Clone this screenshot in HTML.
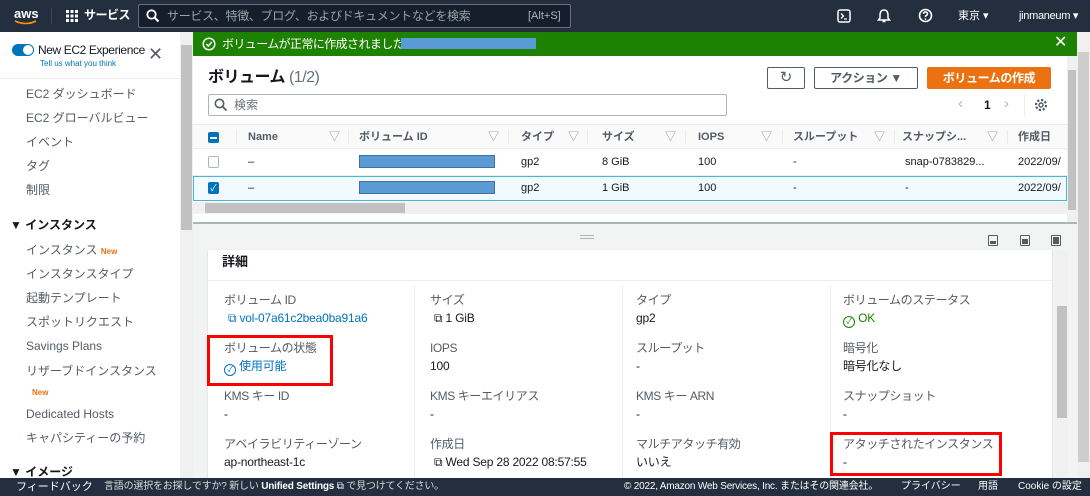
<!DOCTYPE html>
<html><head><meta charset="utf-8"><style>
*{box-sizing:border-box;margin:0;padding:0}
body{width:1090px;height:496px;overflow:hidden;font-family:"Liberation Sans","Noto Sans CJK JP",sans-serif;font-size:12px;line-height:15px;color:#16191f;background:#f2f3f3;position:relative}
.abs{position:absolute}
.top{left:0;top:0;width:1090px;height:32px;background:#232f3e;color:#fff}
.side{left:0;top:32px;width:180px;height:446px;background:#fff}
.side .it{position:absolute;left:26px;color:#545b64;font-size:12px}
.vs{background:#f0f0f0}
.thumb{background:#c1c1c1}
.foot{left:0;top:478px;width:1090px;height:18px;background:#232f3e;color:#fff;font-size:10px;line-height:12px}
.th{position:absolute;top:131px;font-weight:bold;font-size:11px;line-height:13px;color:#545b64}
.td{position:absolute;font-size:11px;line-height:13px;color:#16191f}
.lbl{position:absolute;color:#545b64;font-size:12px;letter-spacing:-0.4px}
.val{position:absolute;color:#16191f;font-size:12px;letter-spacing:-0.2px}
.blue{background:#5b9bd5;border:1px solid #41719c}
.sep{position:absolute;width:1px;background:#eaeded}
.arr{color:#879596;font-weight:normal}
</style></head><body>
<div class="abs top">
 <div class="abs" style="left:14px;top:6px;font-weight:bold;font-size:13px">aws</div>
 <svg class="abs" style="left:14px;top:20px" width="24" height="6"><path d="M1 1 Q12 6 22 1" stroke="#ff9900" stroke-width="1.6" fill="none"/></svg>
 <div class="abs" style="left:51px;top:8px;width:1px;height:16px;background:#444"></div>
 <svg class="abs" style="left:66px;top:10px" width="12" height="12" fill="#fff"><rect x="0" y="0" width="3" height="3"/><rect x="4.5" y="0" width="3" height="3"/><rect x="9" y="0" width="3" height="3"/><rect x="0" y="4.5" width="3" height="3"/><rect x="4.5" y="4.5" width="3" height="3"/><rect x="9" y="4.5" width="3" height="3"/><rect x="0" y="9" width="3" height="3"/><rect x="4.5" y="9" width="3" height="3"/><rect x="9" y="9" width="3" height="3"/></svg>
 <div class="abs" style="left:84px;top:8px;font-weight:bold;font-size:12px;letter-spacing:-0.5px">サービス</div>
 <div class="abs" style="left:138px;top:4px;width:433px;height:24px;background:#161e2d;border:1px solid #687078;border-radius:2px"></div>
 <svg class="abs" style="left:146px;top:9px" width="14" height="14"><circle cx="5.5" cy="5.5" r="4.2" stroke="#fff" stroke-width="1.8" fill="none"/><path d="M8.5 8.5 L12.5 12.5" stroke="#fff" stroke-width="2"/></svg>
 <div class="abs" style="left:167px;top:9px;color:#95a5a6;font-size:12px;letter-spacing:-0.3px">サービス、特徴、ブログ、およびドキュメントなどを検索</div>
 <div class="abs" style="left:528px;top:9px;color:#aab7b8;font-size:11px">[Alt+S]</div>
 <svg class="abs" style="left:837px;top:9px" width="14" height="14"><rect x="1" y="1" width="12" height="12" rx="2" stroke="#fff" stroke-width="1.5" fill="none"/><path d="M4 4.5 L6.5 7 L4 9.5 M7 10 H10" stroke="#fff" stroke-width="1.3" fill="none"/></svg>
 <svg class="abs" style="left:876px;top:8px" width="16" height="16"><path d="M8 2 C5 2 4 4.5 4 7 V10 L2.5 12 H13.5 L12 10 V7 C12 4.5 11 2 8 2 Z M6.5 13.5 H9.5" stroke="#fff" stroke-width="1.5" fill="none"/></svg>
 <svg class="abs" style="left:918px;top:8px" width="15" height="15"><circle cx="7.5" cy="7.5" r="6" stroke="#fff" stroke-width="1.6" fill="none"/><path d="M5.5 6 Q5.5 4 7.5 4 Q9.5 4 9.5 6 Q9.5 7.2 7.5 8 V9" stroke="#fff" stroke-width="1.5" fill="none"/><circle cx="7.5" cy="11" r="0.9" fill="#fff"/></svg>
 <div class="abs" style="left:958px;top:9px;font-size:11px">東京 ▾</div>
 <div class="abs" style="left:1019px;top:9px;font-size:11px;letter-spacing:-0.3px">jinmaneum ▾</div>
</div>

<div class="abs side">
 <div class="abs" style="left:12px;top:12px;width:22px;height:12px;border-radius:6px;background:#0073bb"></div>
 <div class="abs" style="left:23px;top:13px;width:10px;height:10px;border-radius:5px;background:#fff"></div>
 <div class="abs" style="left:38px;top:11px;font-size:12px;color:#16191f;letter-spacing:-0.4px">New EC2 Experience</div>
 <div class="abs" style="left:40px;top:27px;font-size:8px;line-height:10px;color:#0073bb">Tell us what you think</div>
 <div class="abs" style="left:148px;top:13px;font-size:18px;color:#545b64;line-height:18px">✕</div>
 <div class="abs" style="left:0;top:46px;width:180px;height:1px;background:#eaeded"></div>
 <div class="it" style="top:55px">EC2 ダッシュボード</div>
 <div class="it" style="top:79px">EC2 グローバルビュー</div>
 <div class="it" style="top:103px">イベント</div>
 <div class="it" style="top:127px">タグ</div>
 <div class="it" style="top:151px">制限</div>
 <div class="abs" style="left:10px;top:186px;font-weight:bold;font-size:12px;color:#16191f">▼ インスタンス</div>
 <div class="it" style="top:211px">インスタンス <span style="color:#ec7211;font-size:8px;font-weight:bold">New</span></div>
 <div class="it" style="top:235px">インスタンスタイプ</div>
 <div class="it" style="top:259px">起動テンプレート</div>
 <div class="it" style="top:283px">スポットリクエスト</div>
 <div class="it" style="top:307px">Savings Plans</div>
 <div class="it" style="top:332px">リザーブドインスタンス</div>
 <div class="abs" style="left:32px;top:353px;color:#ec7211;font-size:8px;font-weight:bold">New</div>
 <div class="it" style="top:375px">Dedicated Hosts</div>
 <div class="it" style="top:399px">キャパシティーの予約</div>
 <div class="abs" style="left:10px;top:433px;font-weight:bold;font-size:12px;color:#16191f">▼ イメージ</div>
</div>
<div class="abs vs" style="left:180px;top:32px;width:13px;height:446px"></div>
<div class="abs thumb" style="left:181px;top:45px;width:11px;height:185px"></div>

<div class="abs" style="left:193px;top:32px;width:884px;height:24px;background:#1d8102;color:#fff">
 <svg class="abs" style="left:9px;top:5px" width="14" height="14"><circle cx="7" cy="7" r="5.8" stroke="#fff" stroke-width="1.5" fill="none"/><path d="M4.3 7 L6.3 9 L9.8 5" stroke="#fff" stroke-width="1.5" fill="none"/></svg>
 <div class="abs" style="left:29px;top:5px;font-size:12px;letter-spacing:-0.6px">ボリュームが正常に作成されました</div>
 <div class="abs blue" style="left:208px;top:6px;width:135px;height:11px;border:none"></div>
 <div class="abs" style="left:861px;top:3px;font-size:16px">✕</div>
</div>
<div class="abs vs" style="left:1077px;top:32px;width:13px;height:446px"></div>
<div class="abs thumb" style="left:1078px;top:52px;width:11px;height:410px;background:#cdcdcd"></div>

<div class="abs" style="left:193px;top:56px;width:874px;height:168px;background:#fff"></div>
<div class="abs" style="left:208px;top:68px;font-size:16px;line-height:20px;font-weight:bold;letter-spacing:-0.5px">ボリューム <span style="font-weight:normal;color:#687078">(1/2)</span></div>
<div class="abs" style="left:767px;top:67px;width:38px;height:22px;border:1px solid #545b64;border-radius:2px;background:#fff;text-align:center;font-size:15px;line-height:19px;color:#545b64">↻</div>
<div class="abs" style="left:814px;top:67px;width:104px;height:22px;border:1px solid #545b64;border-radius:2px;background:#fff;text-align:center;font-size:12px;line-height:20px;color:#545b64;font-weight:bold;letter-spacing:-0.4px">アクション ▼</div>
<div class="abs" style="left:927px;top:67px;width:124px;height:22px;border-radius:2px;background:#ec7211;text-align:center;font-size:12px;line-height:22px;color:#fff;font-weight:bold;letter-spacing:-0.4px">ボリュームの作成</div>
<div class="abs" style="left:208px;top:94px;width:519px;height:22px;border:1px solid #aab7b8;border-radius:2px;background:#fff"></div>
<svg class="abs" style="left:214px;top:98px" width="14" height="14"><circle cx="5.5" cy="5.5" r="4.2" stroke="#545b64" stroke-width="1.6" fill="none"/><path d="M8.5 8.5 L12.5 12.5" stroke="#545b64" stroke-width="1.8"/></svg>
<div class="abs" style="left:234px;top:98px;color:#687078">検索</div>
<div class="abs" style="left:958px;top:96px;color:#aab7b8;font-size:15px">‹</div>
<div class="abs" style="left:984px;top:98px;font-weight:bold">1</div>
<div class="abs" style="left:1004px;top:96px;color:#aab7b8;font-size:15px">›</div>
<div class="abs" style="left:1024px;top:94px;width:1px;height:22px;background:#eaeded"></div>
<svg class="abs" style="left:1034px;top:98px" width="14" height="14"><circle cx="7" cy="7" r="5" stroke="#545b64" stroke-width="2.2" fill="none" stroke-dasharray="2.2 1.7"/><circle cx="7" cy="7" r="2" stroke="#545b64" stroke-width="1.4" fill="none"/></svg>
<div class="abs" style="left:193px;top:124px;width:874px;height:1px;background:#eaeded"></div>
<div class="abs" style="left:193px;top:125px;width:874px;height:24px;background:#fafafa;border-bottom:1px solid #eaeded"></div>
<div class="abs" style="left:208px;top:132px;width:11px;height:11px;background:#0073bb;border-radius:2px"><div style="margin:4.5px 2px;height:2px;background:#fff"></div></div>
<div class="th" style="left:248px">Name</div>
<div class="th" style="left:359px">ボリューム ID</div>
<div class="th" style="left:521px">タイプ</div>
<div class="th" style="left:602px">サイズ</div>
<div class="th" style="left:698px">IOPS</div>
<div class="th" style="left:793px">スループット</div>
<div class="th" style="left:902px">スナップシ...</div>
<div class="th" style="left:1018px">作成日</div>
<div class="th arr" style="left:329px">▽</div>
<div class="th arr" style="left:488px">▽</div>
<div class="th arr" style="left:568px">▽</div>
<div class="th arr" style="left:665px">▽</div>
<div class="th arr" style="left:761px">▽</div>
<div class="th arr" style="left:874px">▽</div>
<div class="th arr" style="left:987px">▽</div>
<div class="sep" style="left:236px;top:130px;height:14px"></div><div class="sep" style="left:348px;top:130px;height:14px"></div><div class="sep" style="left:508px;top:130px;height:14px"></div><div class="sep" style="left:587px;top:130px;height:14px"></div><div class="sep" style="left:685px;top:130px;height:14px"></div><div class="sep" style="left:782px;top:130px;height:14px"></div><div class="sep" style="left:894px;top:130px;height:14px"></div><div class="sep" style="left:1007px;top:130px;height:14px"></div>
<div class="abs" style="left:193px;top:175px;width:874px;height:1px;background:#eaeded"></div>
<div class="abs" style="left:208px;top:156px;width:11px;height:12px;border:1px solid #aab7b8;border-radius:2px;background:#fff"></div>
<div class="td" style="left:248px;top:156px">–</div>
<div class="abs blue" style="left:359px;top:155px;width:136px;height:13px"></div>
<div class="td" style="left:521px;top:156px">gp2</div><div class="td" style="left:602px;top:156px">8 GiB</div><div class="td" style="left:698px;top:156px">100</div><div class="td" style="left:793px;top:156px">-</div><div class="td" style="left:905px;top:156px">snap-0783829...</div><div class="td" style="left:1018px;top:156px">2022/09/</div>
<div class="abs" style="left:193px;top:176px;width:874px;height:25px;background:#f1faff;border:1px solid #44b9d6"></div>
<div class="abs" style="left:208px;top:182px;width:11px;height:12px;background:#0073bb;border-radius:2px;color:#fff;font-size:9px;line-height:12px;text-align:center">✓</div>
<div class="td" style="left:248px;top:182px">–</div>
<div class="abs blue" style="left:359px;top:181px;width:136px;height:13px"></div>
<div class="td" style="left:521px;top:182px">gp2</div><div class="td" style="left:602px;top:182px">1 GiB</div><div class="td" style="left:698px;top:182px">100</div><div class="td" style="left:793px;top:182px">-</div><div class="td" style="left:905px;top:182px">-</div><div class="td" style="left:1018px;top:182px">2022/09/</div>
<div class="abs" style="left:193px;top:202px;width:874px;height:12px;background:#f0f0f0"></div>
<div class="abs" style="left:205px;top:203px;width:200px;height:10px;background:#c1c1c1"></div>
<div class="abs" style="left:1067px;top:56px;width:10px;height:168px;background:#f0f0f0"></div>
<div class="abs" style="left:1068px;top:70px;width:8px;height:140px;background:#c1c1c1"></div>
<div class="abs" style="left:193px;top:222px;width:884px;height:2px;background:#aab7b8"></div>
<div class="abs" style="left:580px;top:235px;width:14px;height:4px;border-top:1px solid #aab7b8;border-bottom:1px solid #aab7b8"></div>
<div class="abs" style="left:988px;top:235px;width:10px;height:11px;border:1.5px solid #545b64;border-radius:1px"><div style="position:absolute;left:1px;right:1px;bottom:1px;height:3px;background:#545b64"></div></div>
<div class="abs" style="left:1020px;top:235px;width:10px;height:11px;border:1.5px solid #545b64;border-radius:1px"><div style="position:absolute;left:1px;right:1px;bottom:1px;top:3px;background:#545b64"></div></div>
<div class="abs" style="left:1051px;top:235px;width:10px;height:11px;border:1.5px solid #545b64;border-radius:1px"><div style="position:absolute;left:1px;right:1px;bottom:1px;top:1px;background:#545b64"></div></div>

<div class="abs" style="left:208px;top:250px;width:844px;height:228px;background:#fff;box-shadow:0 1px 2px rgba(0,0,0,.15)"></div>
<div class="abs" style="left:1056px;top:250px;width:12px;height:228px;background:#f0f0f0"></div>
<div class="abs" style="left:1057px;top:306px;width:10px;height:112px;background:#c1c1c1"></div>
<div class="abs" style="left:222px;top:254px;font-weight:bold;font-size:13px">詳細</div>
<div class="abs" style="left:208px;top:280px;width:844px;height:1px;background:#eaeded"></div>
<div class="sep" style="left:414px;top:285px;height:193px"></div>
<div class="sep" style="left:622px;top:285px;height:193px"></div>
<div class="sep" style="left:830px;top:285px;height:193px"></div>

<div class="lbl" style="left:224px;top:293px">ボリューム ID</div>
<div class="val" style="left:228px;top:311px;color:#0073bb">⧉ vol-07a61c2bea0ba91a6</div>
<div class="lbl" style="left:224px;top:341px">ボリュームの状態</div>
<div class="val" style="left:224px;top:359px;color:#0073bb"><span style="display:inline-block;width:12px;height:12px;border:1.5px solid #0073bb;border-radius:6px;font-size:8px;line-height:9px;text-align:center;vertical-align:-2px">✓</span> 使用可能</div>
<div class="abs" style="left:207px;top:335px;width:126px;height:51px;border:3px solid #f00"></div>
<div class="lbl" style="left:224px;top:389px">KMS キー ID</div><div class="val" style="left:224px;top:407px">-</div>
<div class="lbl" style="left:224px;top:437px">アベイラビリティーゾーン</div><div class="val" style="left:224px;top:455px">ap-northeast-1c</div>

<div class="lbl" style="left:430px;top:293px">サイズ</div><div class="val" style="left:434px;top:311px">⧉ 1 GiB</div>
<div class="lbl" style="left:430px;top:341px">IOPS</div><div class="val" style="left:430px;top:359px">100</div>
<div class="lbl" style="left:430px;top:389px">KMS キーエイリアス</div><div class="val" style="left:430px;top:407px">-</div>
<div class="lbl" style="left:430px;top:437px">作成日</div><div class="val" style="left:434px;top:455px">⧉ Wed Sep 28 2022 08:57:55</div>

<div class="lbl" style="left:636px;top:293px">タイプ</div><div class="val" style="left:636px;top:311px">gp2</div>
<div class="lbl" style="left:636px;top:341px">スループット</div><div class="val" style="left:636px;top:359px">-</div>
<div class="lbl" style="left:636px;top:389px">KMS キー ARN</div><div class="val" style="left:636px;top:407px">-</div>
<div class="lbl" style="left:636px;top:437px">マルチアタッチ有効</div><div class="val" style="left:636px;top:455px">いいえ</div>

<div class="lbl" style="left:843px;top:293px">ボリュームのステータス</div>
<div class="val" style="left:843px;top:311px;color:#1d8102"><span style="display:inline-block;width:12px;height:12px;border:1.5px solid #1d8102;border-radius:6px;font-size:8px;line-height:9px;text-align:center;vertical-align:-2px">✓</span> OK</div>
<div class="lbl" style="left:843px;top:341px">暗号化</div><div class="val" style="left:843px;top:359px">暗号化なし</div>
<div class="lbl" style="left:843px;top:389px">スナップショット</div><div class="val" style="left:843px;top:407px">-</div>
<div class="lbl" style="left:843px;top:437px">アタッチされたインスタンス</div><div class="val" style="left:843px;top:455px">-</div>
<div class="abs" style="left:830px;top:432px;width:172px;height:44px;border:3px solid #f00"></div>

<div class="abs foot">
 <div class="abs" style="left:16px;top:3px;font-size:11px">フィードバック</div>
 <div class="abs" style="left:104px;top:3px;color:#d5dbdb;letter-spacing:-0.2px">言語の選択をお探しですか? 新しい <b style="color:#fff">Unified Settings</b> <span style="color:#fff">⧉</span> で見つけてください。</div>
 <div class="abs" style="left:624px;top:3px;color:#fff;letter-spacing:-0.2px">© 2022, Amazon Web Services, Inc. またはその関連会社。</div>
 <div class="abs" style="left:901px;top:3px">プライバシー</div>
 <div class="abs" style="left:978px;top:3px">用語</div>
 <div class="abs" style="left:1018px;top:3px">Cookie の設定</div>
</div>
</body></html>
